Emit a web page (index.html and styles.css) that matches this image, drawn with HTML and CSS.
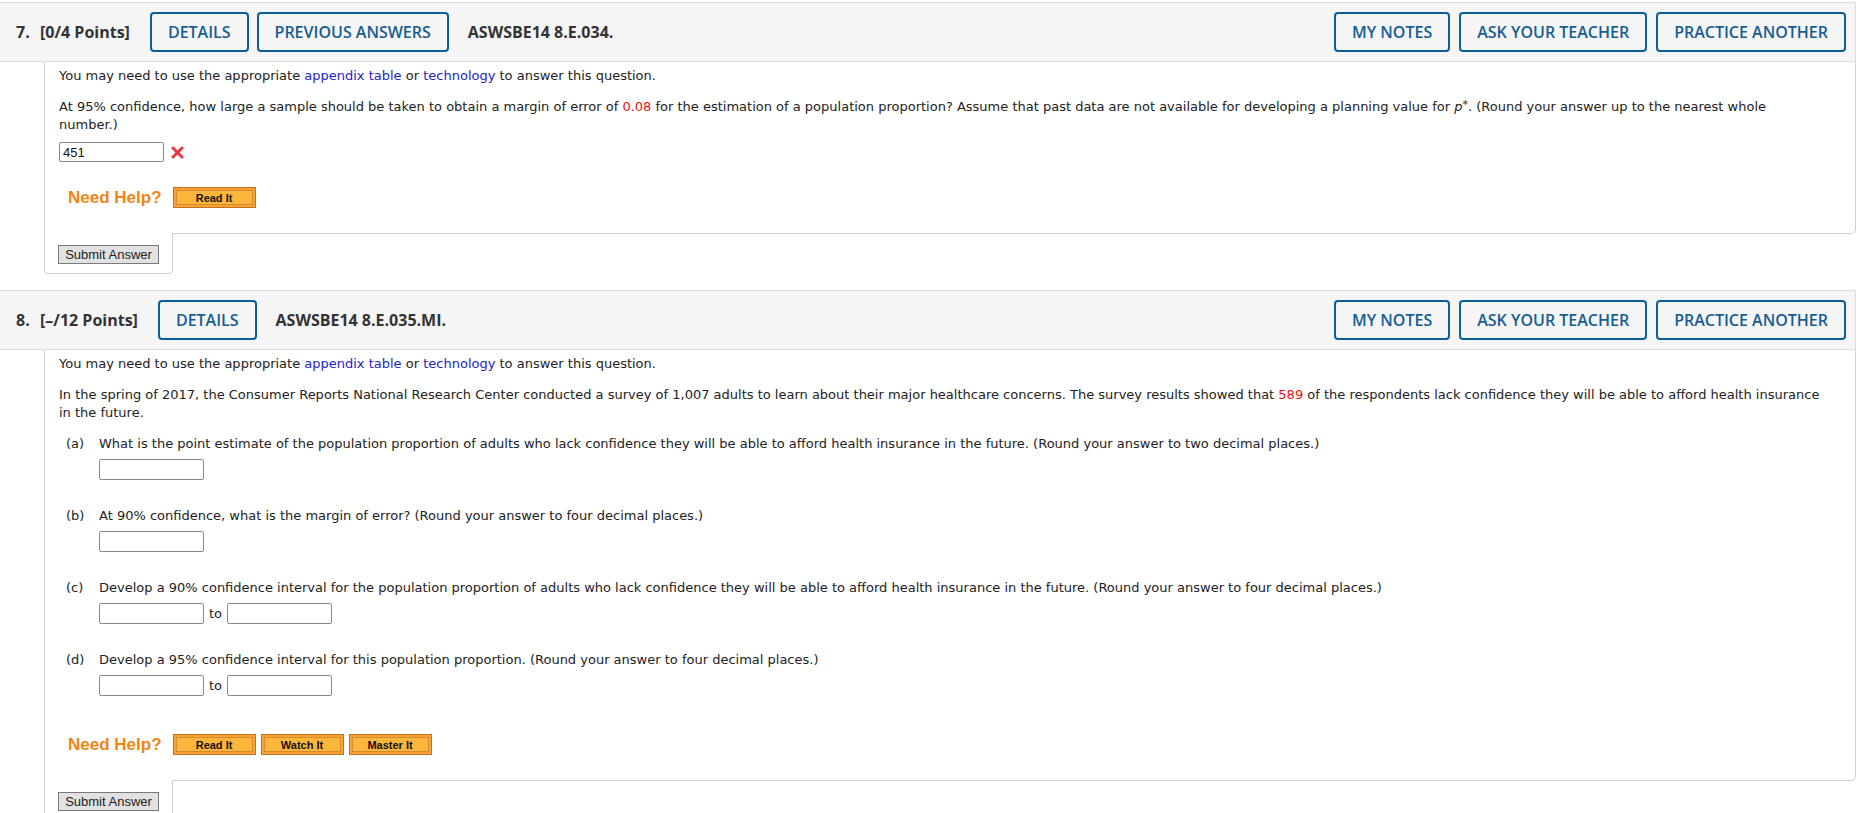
FILE: index.html
```html
<!DOCTYPE html>
<html lang="en">
<head>
<meta charset="utf-8">
<title>Questions</title>
<link rel="stylesheet" href="styles.css">
</head>
<body>
<div class="page">

  <section class="question">
    <div class="q-header">
      <span class="q-num">7.</span>
      <span class="q-points">[0/4 Points]</span>
      <div class="btn-group">
        <button class="hbtn">DETAILS</button>
        <button class="hbtn">PREVIOUS ANSWERS</button>
      </div>
      <span class="q-title">ASWSBE14 8.E.034.</span>
      <div class="q-actions">
        <button class="hbtn">MY NOTES</button>
        <button class="hbtn">ASK YOUR TEACHER</button>
        <button class="hbtn">PRACTICE ANOTHER</button>
      </div>
    </div>
    <div class="q-body">
      <div class="q-content">
        <p class="intro">You may need to use the appropriate <a class="link">appendix table</a> or <a class="link">technology</a> to answer this question.</p>
        <p class="stem">At 95% confidence, how large a sample should be taken to obtain a margin of error of <span class="red">0.08</span> for the estimation of a population proportion? Assume that past data are not available for developing a planning value for <i>p</i><sup class="star">*</sup>. (Round your answer up to the nearest whole<br>number.)</p>
        <div class="answer-row">
          <input class="ans ans-filled" type="text" value="451">
          <svg class="wrong" width="13" height="13" viewBox="0 0 13 13" aria-hidden="true">
            <path d="M2 2 L11 11 M11 2 L2 11" stroke="#e8383d" stroke-width="3" stroke-linecap="round"/>
          </svg>
        </div>
        <div class="need-help">
          <span class="nh-label">Need Help?</span>
          <button class="help-btn">Read It</button>
        </div>
      </div>
      <div class="q-footer">
        <div class="submit-tab"><button class="submit">Submit Answer</button></div>
      </div>
    </div>
  </section>

  <section class="question">
    <div class="q-header">
      <span class="q-num">8.</span>
      <span class="q-points">[&ndash;/12 Points]</span>
      <div class="btn-group">
        <button class="hbtn">DETAILS</button>
      </div>
      <span class="q-title">ASWSBE14 8.E.035.MI.</span>
      <div class="q-actions">
        <button class="hbtn">MY NOTES</button>
        <button class="hbtn">ASK YOUR TEACHER</button>
        <button class="hbtn">PRACTICE ANOTHER</button>
      </div>
    </div>
    <div class="q-body">
      <div class="q-content">
        <p class="intro">You may need to use the appropriate <a class="link">appendix table</a> or <a class="link">technology</a> to answer this question.</p>
        <p class="stem">In the spring of 2017, the Consumer Reports National Research Center conducted a survey of 1,007 adults to learn about their major healthcare concerns. The survey results showed that <span class="red">589</span> of the respondents lack confidence they will be able to afford health insurance in the future.</p>
        <div class="parts">
          <div class="part">
            <span class="part-label">(a)</span>
            <div class="part-main">
              <div class="part-text">What is the point estimate of the population proportion of adults who lack confidence they will be able to afford health insurance in the future. (Round your answer to two decimal places.)</div>
              <div class="part-inputs"><input class="ans" type="text"></div>
            </div>
          </div>
          <div class="part">
            <span class="part-label">(b)</span>
            <div class="part-main">
              <div class="part-text">At 90% confidence, what is the margin of error? (Round your answer to four decimal places.)</div>
              <div class="part-inputs"><input class="ans" type="text"></div>
            </div>
          </div>
          <div class="part">
            <span class="part-label">(c)</span>
            <div class="part-main">
              <div class="part-text">Develop a 90% confidence interval for the population proportion of adults who lack confidence they will be able to afford health insurance in the future. (Round your answer to four decimal places.)</div>
              <div class="part-inputs"><input class="ans" type="text"><span class="to">to</span><input class="ans" type="text"></div>
            </div>
          </div>
          <div class="part">
            <span class="part-label">(d)</span>
            <div class="part-main">
              <div class="part-text">Develop a 95% confidence interval for this population proportion. (Round your answer to four decimal places.)</div>
              <div class="part-inputs"><input class="ans" type="text"><span class="to">to</span><input class="ans" type="text"></div>
            </div>
          </div>
        </div>
        <div class="need-help">
          <span class="nh-label">Need Help?</span>
          <button class="help-btn">Read It</button>
          <button class="help-btn">Watch It</button>
          <button class="help-btn">Master It</button>
        </div>
      </div>
      <div class="q-footer">
        <div class="submit-tab"><button class="submit">Submit Answer</button></div>
      </div>
    </div>
  </section>

</div>
</body>
</html>
```

FILE: styles.css
```css
* { box-sizing: border-box; }

html, body {
  margin: 0;
  padding: 0;
  background: #ffffff;
}

.page {
  padding: 2px 6px 0 0;
}

.question + .question {
  margin-top: 16px;
}

/* ---------- header ---------- */
.q-header {
  display: flex;
  align-items: center;
  background: #f5f5f5;
  border-top: 1px solid #dedede;
  border-bottom: 1px solid #dedede;
  border-right: 1px solid #dedede;
  padding: 9px 9px 9px 16px;
  font-family: "Open Sans", "Liberation Sans", sans-serif;
  font-size: 16px;
  color: #333333;
}

.q-num {
  width: 24px;
  font-weight: 700;
}

.q-points {
  font-weight: 700;
}

.btn-group {
  display: flex;
  gap: 8px;
  margin-left: 20px;
}

.q-title {
  margin-left: 19px;
  font-weight: 700;
}

.q-actions {
  display: flex;
  gap: 9px;
  margin-left: auto;
}

.hbtn {
  height: 40px;
  padding: 0 16px;
  border: 2px solid #0b5f99;
  border-radius: 4px;
  background: transparent;
  color: #175d92;
  font-family: "Open Sans", "Liberation Sans", sans-serif;
  font-size: 16px;
  font-weight: 600;
  line-height: 1;
  cursor: pointer;
}

/* ---------- body ---------- */
.q-body {
  margin-left: 44px;
}

.q-content {
  border: 1px solid #cfcfcf;
  border-top: none;
  border-radius: 0 0 5px 0;
  padding: 5px 30px 25px 14px;
  font-family: "DejaVu Sans", Verdana, sans-serif;
  font-size: 13px;
  line-height: 18px;
  color: #222222;
}

.q-content p {
  margin: 0;
}

.intro {
  margin-bottom: 13px !important;
}

.link {
  color: #2424c4;
  text-decoration: none;
}

.red {
  color: #ee1111;
}

.star {
  font-size: 11px;
  line-height: 0;
  vertical-align: 3px;
}

.answer-row {
  display: flex;
  align-items: center;
  margin-top: 8px;
  height: 20px;
}

.ans {
  width: 105px;
  height: 21px;
  border: 1px solid #8a8a8a;
  border-radius: 2px;
  padding: 0 3px;
  margin: 0;
  font-family: "Liberation Sans", Arial, sans-serif;
  font-size: 13px;
  color: #111111;
  background: #ffffff;
}

.ans-filled {
  height: 20px;
}

.wrong {
  margin-left: 7px;
}

/* parts */
.parts {
  margin-top: 13px;
  padding-bottom: 13px;
  padding-left: 7px;
}

.part {
  display: flex;
}

.part + .part {
  margin-top: 27px;
}

.part-label {
  width: 33px;
  flex: none;
}

.part-main {
  flex: 1;
}

.part-inputs {
  display: flex;
  align-items: center;
  margin-top: 6px;
}

.to {
  margin: 0 5px;
}

/* need help */
.need-help {
  display: flex;
  align-items: center;
  gap: 5px;
  margin-top: 25px;
  padding-left: 9px;
  height: 21px;
}

.nh-label {
  font-family: "Liberation Sans", Arial, sans-serif;
  font-weight: 700;
  font-size: 17px;
  color: #f08513;
  margin-right: 6px;
}

.help-btn {
  width: 83px;
  height: 21px;
  padding: 0;
  border: 1px solid #c07225;
  background: #fdb63c;
  box-shadow: inset 0 0 0 2px #f8a234, inset 0 0 0 3px #d88a30;
  font-family: "Liberation Sans", Arial, sans-serif;
  font-size: 11px;
  font-weight: 700;
  color: #111111;
  cursor: pointer;
}

/* footer tab */
.q-footer {
  display: flex;
}

.submit-tab {
  width: 129px;
  margin-top: -1px;
  background: #ffffff;
  border: 1px solid #cfcfcf;
  border-top: none;
  border-radius: 0 0 4px 4px;
  padding: 12px 0 9px 13px;
}

.submit {
  width: 101px;
  height: 19px;
  padding: 0;
  border: 1px solid #7a7a7a;
  background: #e1e1e1;
  font-family: "Liberation Sans", Arial, sans-serif;
  font-size: 13px;
  color: #222222;
  line-height: 1;
  cursor: pointer;
}
```
